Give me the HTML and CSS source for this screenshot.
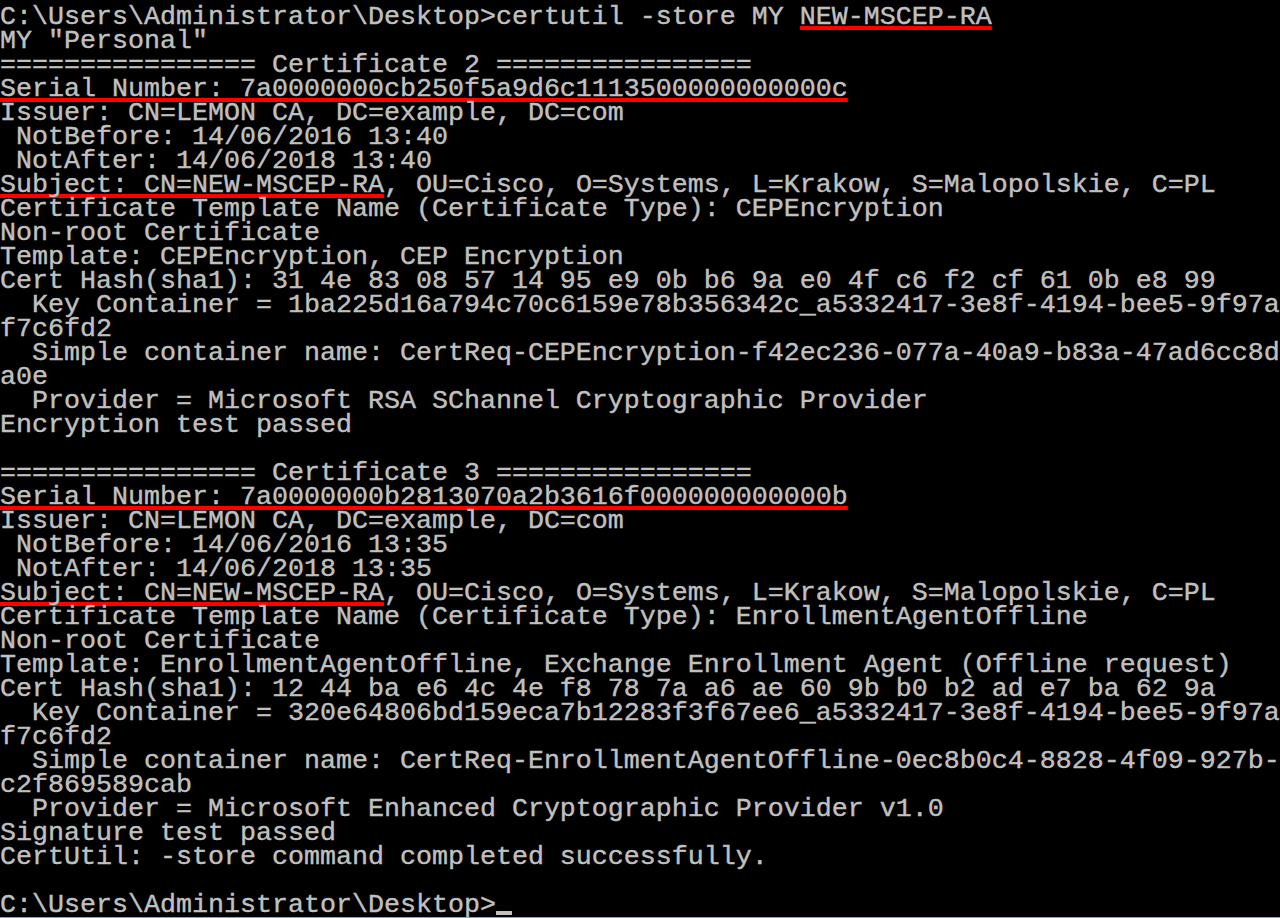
FILE: index.html
```html
<!DOCTYPE html>
<html>
<head>
<meta charset="utf-8">
<link rel="stylesheet" href="styles.css">
</head>
<body>
<div class="console">
<pre class="screen">C:\Users\Administrator\Desktop&gt;certutil -store MY <span class="mark">NEW-MSCEP-RA</span>
MY "Personal"
================ Certificate 2 ================
<span class="mark">Serial Number: 7a0000000cb250f5a9d6c1113500000000000c</span>
Issuer: CN=LEMON CA, DC=example, DC=com
 NotBefore: 14/06/2016 13:40
 NotAfter: 14/06/2018 13:40
<span class="mark">Subject: CN=NEW-MSCEP-RA</span>, OU=Cisco, O=Systems, L=Krakow, S=Malopolskie, C=PL
Certificate Template Name (Certificate Type): CEPEncryption
Non-root Certificate
Template: CEPEncryption, CEP Encryption
Cert Hash(sha1): 31 4e 83 08 57 14 95 e9 0b b6 9a e0 4f c6 f2 cf 61 0b e8 99
  Key Container = 1ba225d16a794c70c6159e78b356342c_a5332417-3e8f-4194-bee5-9f97a
f7c6fd2
  Simple container name: CertReq-CEPEncryption-f42ec236-077a-40a9-b83a-47ad6cc8d
a0e
  Provider = Microsoft RSA SChannel Cryptographic Provider
Encryption test passed

================ Certificate 3 ================
<span class="mark">Serial Number: 7a0000000b2813070a2b3616f000000000000b</span>
Issuer: CN=LEMON CA, DC=example, DC=com
 NotBefore: 14/06/2016 13:35
 NotAfter: 14/06/2018 13:35
<span class="mark">Subject: CN=NEW-MSCEP-RA</span>, OU=Cisco, O=Systems, L=Krakow, S=Malopolskie, C=PL
Certificate Template Name (Certificate Type): EnrollmentAgentOffline
Non-root Certificate
Template: EnrollmentAgentOffline, Exchange Enrollment Agent (Offline request)
Cert Hash(sha1): 12 44 ba e6 4c 4e f8 78 7a a6 ae 60 9b b0 b2 ad e7 ba 62 9a
  Key Container = 320e64806bd159eca7b12283f3f67ee6_a5332417-3e8f-4194-bee5-9f97a
f7c6fd2
  Simple container name: CertReq-EnrollmentAgentOffline-0ec8b0c4-8828-4f09-927b-
c2f869589cab
  Provider = Microsoft Enhanced Cryptographic Provider v1.0
Signature test passed
CertUtil: -store command completed successfully.

C:\Users\Administrator\Desktop&gt;<span class="cursor"></span></pre>
<div class="edge"></div>
</div>
</body>
</html>
```

FILE: styles.css
```css
html, body {
  margin: 0;
  padding: 0;
  background: #000;
  width: 1280px;
  height: 918px;
  overflow: hidden;
}

.console {
  display: flex;
  flex-direction: column;
  width: 1280px;
  height: 918px;
  background: #000;
}

.screen {
  flex: 1;
  margin: 0;
  padding: 5px 0 0 0;
  font-family: "Liberation Mono", "DejaVu Sans Mono", monospace;
  font-size: 26.667px;
  line-height: 24px;
  color: #c0c0c0;
  -webkit-text-stroke: 0.4px #c0c0c0;
  white-space: pre;
  overflow: hidden;
}

.mark {
  text-decoration: underline;
  text-decoration-color: #ff0000;
  text-decoration-thickness: 4px;
  text-underline-offset: 2px;
  text-decoration-skip-ink: none;
}

.cursor {
  display: inline-block;
  width: 16px;
  height: 4px;
  background: #c0c0c0;
  vertical-align: -3px;
}

.edge {
  height: 1px;
  background: #7aa6c2;
}
```
